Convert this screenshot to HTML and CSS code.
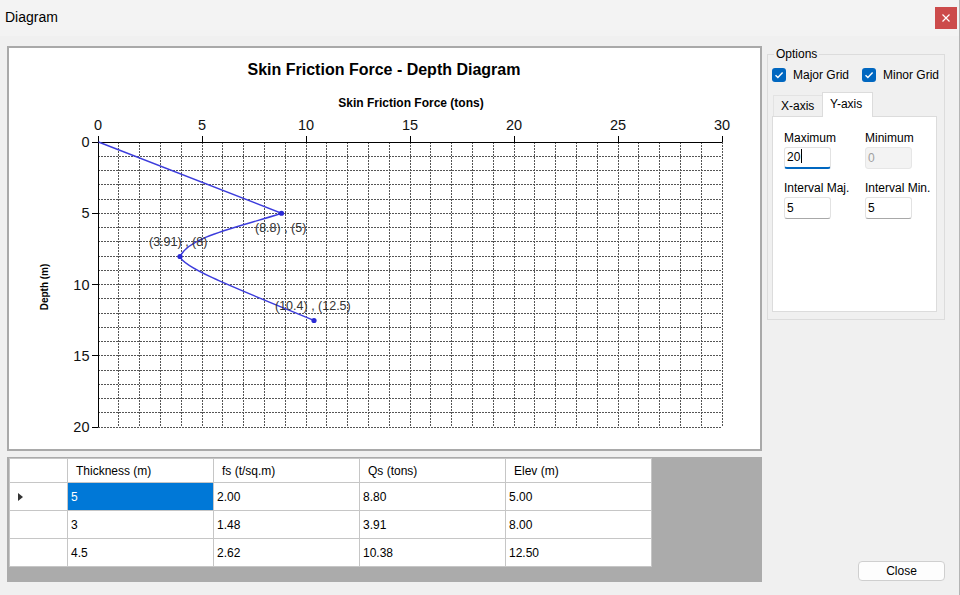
FILE: index.html
```html
<!DOCTYPE html>
<html>
<head>
<meta charset="utf-8">
<title>Diagram</title>
<link rel="stylesheet" href="styles.css">
</head>
<body>
<div class="window">
  <div class="titlebar">
    <span class="title">Diagram</span>
    <div class="close-x">
      <svg width="10" height="10" viewBox="0 0 10 10"><path d="M1.5 1.5L8.5 8.5M8.5 1.5L1.5 8.5" stroke="#fff" stroke-width="1.2"/></svg>
    </div>
  </div>
  <div class="content">
    <div class="left">
      <div class="chart">
        <svg width="751" height="401" viewBox="9 48 751 401" xmlns="http://www.w3.org/2000/svg">
          <g class="grid" fill="none" stroke="#555" stroke-width="1" stroke-dasharray="2 1" shape-rendering="crispEdges">
            <path d="M118.8 142V427M139.6 142V427M160.4 142V427M181.2 142V427M202 142V427M222.8 142V427M243.6 142V427M264.4 142V427M285.2 142V427M306 142V427M326.8 142V427M347.6 142V427M368.4 142V427M389.2 142V427M410 142V427M430.8 142V427M451.6 142V427M472.4 142V427M493.2 142V427M514 142V427M534.8 142V427M555.6 142V427M576.4 142V427M597.2 142V427M618 142V427M638.8 142V427M659.6 142V427M680.4 142V427M701.2 142V427M722 142V427"/>
            <path d="M98 156.25H722M98 170.5H722M98 184.75H722M98 199H722M98 213.25H722M98 227.5H722M98 241.75H722M98 256H722M98 270.25H722M98 284.5H722M98 298.75H722M98 313H722M98 327.25H722M98 341.5H722M98 355.75H722M98 370H722M98 384.25H722M98 398.5H722M98 412.75H722M98 427H722"/>
          </g>
          <g fill="none" stroke="#000" stroke-width="1" shape-rendering="crispEdges">
            <path d="M98 142V427M98 142H722"/>
            <path d="M98 136V142M202 136V142M306 136V142M410 136V142M514 136V142M618 136V142M722 136V142"/>
            <path d="M92 142H98M92 213.25H98M92 284.5H98M92 355.75H98M92 427H98"/>
          </g>
          <text class="c-title" x="384" y="74.5" text-anchor="middle">Skin Friction Force - Depth Diagram</text>
          <text class="c-axis" x="411" y="106.5" text-anchor="middle">Skin Friction Force (tons)</text>
          <text class="c-axis c-yaxis" transform="translate(47.5 287) rotate(-90)" text-anchor="middle">Depth (m)</text>
          <g class="c-tick" text-anchor="middle">
            <text x="98" y="129.5">0</text>
            <text x="202" y="129.5">5</text>
            <text x="306" y="129.5">10</text>
            <text x="410" y="129.5">15</text>
            <text x="514" y="129.5">20</text>
            <text x="618" y="129.5">25</text>
            <text x="722" y="129.5">30</text>
          </g>
          <g class="c-tick" text-anchor="end">
            <text x="89.5" y="147">0</text>
            <text x="89.5" y="218.25">5</text>
            <text x="89.5" y="289.5">10</text>
            <text x="89.5" y="360.75">15</text>
            <text x="89.5" y="432">20</text>
          </g>
          <path d="M98.5 142L281.5 213.25C240 227 190 236 180 256.5C183 268 240 290 314 320.5" fill="none" stroke="#3c3cdc" stroke-width="1.4"/>
          <g fill="#2b2bd6">
            <circle cx="281.5" cy="213.25" r="2.6"/>
            <circle cx="180" cy="256.5" r="2.6"/>
            <circle cx="314" cy="320.5" r="2.6"/>
          </g>
          <g class="c-point">
            <text x="255" y="231.5">(8.8) , (5)</text>
            <text x="149" y="245.5">(3.91) , (8)</text>
            <text x="275" y="309.5">(10.4) , (12.5)</text>
          </g>
        </svg>
      </div>
      <div class="grid-panel">
        <table class="data">
          <colgroup>
            <col class="c-rowhead">
            <col class="c-col">
            <col class="c-col">
            <col class="c-col">
            <col class="c-col">
          </colgroup>
          <thead>
            <tr class="head-row">
              <th></th>
              <th>Thickness (m)</th>
              <th>fs (t/sq.m)</th>
              <th>Qs (tons)</th>
              <th>Elev (m)</th>
            </tr>
          </thead>
          <tbody>
            <tr>
              <td class="rowhead"><span class="arrow"></span></td>
              <td class="selected">5</td>
              <td>2.00</td>
              <td>8.80</td>
              <td>5.00</td>
            </tr>
            <tr>
              <td class="rowhead"></td>
              <td>3</td>
              <td>1.48</td>
              <td>3.91</td>
              <td>8.00</td>
            </tr>
            <tr>
              <td class="rowhead"></td>
              <td>4.5</td>
              <td>2.62</td>
              <td>10.38</td>
              <td>12.50</td>
            </tr>
          </tbody>
        </table>
      </div>
    </div>
    <div class="right">
      <fieldset class="options">
        <legend>Options</legend>
        <div class="checks">
          <span class="check"><svg width="14" height="14" viewBox="0 0 14 14"><path d="M3.5 7.2L5.9 9.6L10.6 4.6" fill="none" stroke="#fff" stroke-width="1.4"/></svg></span>
          <span class="check-label">Major Grid</span>
          <span class="check second"><svg width="14" height="14" viewBox="0 0 14 14"><path d="M3.5 7.2L5.9 9.6L10.6 4.6" fill="none" stroke="#fff" stroke-width="1.4"/></svg></span>
          <span class="check-label">Minor Grid</span>
        </div>
        <div class="tabs">
          <div class="tab">X-axis</div>
          <div class="tab active">Y-axis</div>
        </div>
        <div class="tabpage">
          <div class="form">
            <div class="field">
              <div class="lbl">Maximum</div>
              <div class="tb focused">20<span class="caret"></span></div>
            </div>
            <div class="field">
              <div class="lbl">Minimum</div>
              <div class="tb disabled">0</div>
            </div>
            <div class="field">
              <div class="lbl">Interval Maj.</div>
              <div class="tb">5</div>
            </div>
            <div class="field">
              <div class="lbl">Interval Min.</div>
              <div class="tb">5</div>
            </div>
          </div>
        </div>
      </fieldset>
      <div class="btn">Close</div>
    </div>
  </div>
</div>
</body>
</html>
```
FILE: styles.css
```css
* { box-sizing: border-box; }
html, body { margin: 0; padding: 0; }
body {
  width: 960px;
  height: 595px;
  overflow: hidden;
  background: #f0f0f0;
  font-family: "Liberation Sans", Arial, sans-serif;
  font-size: 12px;
  color: #000;
}
.window {
  width: 960px;
  height: 595px;
  border-right: 1px solid #b4b4b4;
}
.titlebar {
  height: 36px;
  background: #f3f3f3;
  display: flex;
  align-items: center;
  justify-content: space-between;
  padding: 0 2px 0 5px;
}
.title { font-size: 14px; color: #000; margin-top: -2px; }
.close-x {
  width: 22px;
  height: 22px;
  background: #cc4b4b;
  display: flex;
  align-items: center;
  justify-content: center;
}
.close-x svg { display: block; }
.content {
  display: flex;
  padding: 10px 0 0 7px;
}
.left {
  width: 755px;
  display: flex;
  flex-direction: column;
  gap: 6px;
}
.chart {
  height: 405px;
  border: 2px solid #a9a9a9;
  background: #fff;
}
.chart svg { display: block; }
.c-title { font: bold 16px "Liberation Sans", Arial, sans-serif; fill: #000; }
.c-axis { font: bold 12px "Liberation Sans", Arial, sans-serif; fill: #000; }
.c-yaxis { font-size: 10px; }
.c-tick text { font: 14.5px "Liberation Sans", Arial, sans-serif; fill: #111; }
.c-point text { font: 12.5px "Liberation Sans", Arial, sans-serif; fill: #333; }

.grid-panel {
  height: 125px;
  background: #ababab;
  padding: 1px 0 0 2px;
}
.data {
  border-collapse: collapse;
  table-layout: fixed;
  width: 643px;
  background: #fff;
}
.c-rowhead { width: 58px; }
.c-col { width: 146px; }
.data th, .data td {
  border: 1px solid #c6c6c6;
  padding: 0 3px;
  font-weight: normal;
  text-align: left;
  white-space: nowrap;
  vertical-align: middle;
  font-size: 12px;
}
.data th { height: 24px; padding-left: 8px; }
.data td { height: 28px; }
.data td.selected { background: #0078d7; color: #fff; }
.data td.rowhead { padding-left: 8px; }
.arrow {
  display: block;
  width: 0;
  height: 0;
  border-top: 4.5px solid transparent;
  border-bottom: 4.5px solid transparent;
  border-left: 5px solid #333;
}

.right {
  width: 178px;
  height: 534px;
  margin: 1px 0 0 5px;
  display: flex;
  flex-direction: column;
}
.options {
  margin: 0;
  padding: 0 7px 7px 4px;
  border: 1px solid #dcdcdc;
  height: 273px;
  min-width: 0;
}
.options legend {
  padding: 0 2px;
  margin-left: 2px;
  line-height: 14px;
  font-size: 12px;
}
.checks {
  display: flex;
  align-items: center;
  height: 14px;
  margin-top: 7px;
}
.check {
  width: 14px;
  height: 14px;
  border-radius: 3px;
  background: #0067c0;
  flex: none;
}
.check svg { display: block; }
.check.second { margin-left: 13px; }
.check-label { margin-left: 7px; white-space: nowrap; }
.tabs {
  display: flex;
  align-items: flex-end;
  margin-top: 10px;
  padding-left: 1px;
  height: 24px;
}
.tab {
  width: 49px;
  height: 21px;
  padding-left: 7px;
  line-height: 21px;
  background: #f0f0f0;
  border: 1px solid #e3e3e3;
  border-bottom: 0;
  border-right: 0;
}
.tab.active {
  width: 51px;
  height: 25px;
  margin-bottom: -1px;
  line-height: 22px;
  background: #fff;
  border: 1px solid #dcdcdc;
  border-bottom: 0;
  position: relative;
  z-index: 1;
}
.tabpage {
  height: 196px;
  background: #fff;
  border: 1px solid #dcdcdc;
  padding: 14px 0 0 11px;
}
.form {
  display: grid;
  grid-template-columns: 81px 81px;
  row-gap: 12px;
}
.lbl { line-height: 14px; white-space: nowrap; }
.tb {
  width: 47px;
  height: 22px;
  margin-top: 2px;
  padding-left: 2px;
  line-height: 20px;
  background: #fff;
  border: 1px solid #e2e2e2;
  border-bottom-color: #a8a8a8;
  border-radius: 3px;
}
.tb.focused {
  border-bottom: 2px solid #0067c0;
  line-height: 19px;
}
.caret {
  display: inline-block;
  width: 1px;
  height: 14px;
  background: #000;
  vertical-align: -2px;
  margin-left: 1px;
}
.tb.disabled {
  background: #f3f3f3;
  border-color: #e6e6e6;
  color: #a0a0a0;
}
.btn {
  margin-top: auto;
  margin-left: auto;
  width: 87px;
  height: 20px;
  border: 1px solid #cfcfcf;
  border-radius: 4px;
  background: #fdfdfd;
  text-align: center;
  line-height: 18px;
}
```
